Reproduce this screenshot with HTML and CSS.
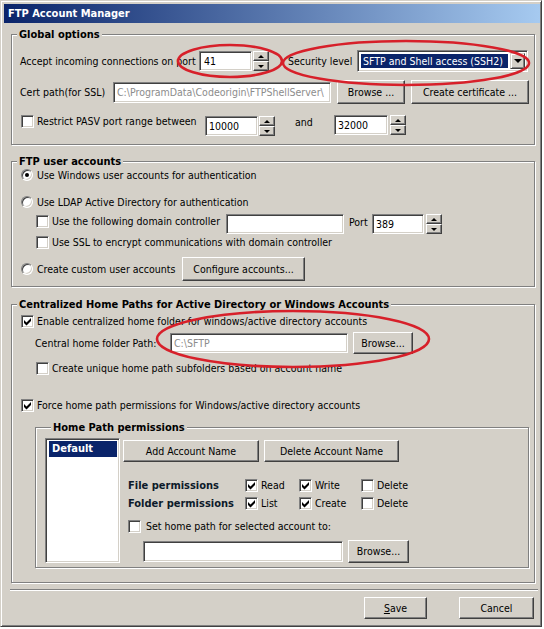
FILE: index.html
```html
<!DOCTYPE html>
<html>
<head>
<meta charset="utf-8">
<title>FTP Account Manager</title>
<link rel="stylesheet" href="styles.css">
</head>
<body>
<div class="window">
  <div class="titlebar">FTP Account Manager</div>
  <div class="client">

    <section class="group g-global">
      <div class="gtitle">Global options</div>
      <div class="row r1">
        <span class="lbl port-label">Accept incoming connections on port</span>
        <span class="edit port-field">41</span>
        <span class="spin"><span class="sb"><i class="arr-up"></i></span><span class="sb"><i class="arr-dn"></i></span></span>
        <span class="lbl sec-label">Security level</span>
        <span class="combo"><span class="combo-sel">SFTP and Shell access (SSH2)</span><span class="combo-btn"><i class="arr-dn big"></i></span></span>
      </div>
      <div class="row r2">
        <span class="lbl cert-label">Cert path(for SSL)</span>
        <span class="edit cert-field disabled">C:\ProgramData\Codeorigin\FTPShellServer\</span>
        <span class="btn browse-cert">Browse ...</span>
        <span class="btn create-cert">Create certificate ...</span>
      </div>
      <div class="row top r3">
        <span class="check pasv-check"><span class="cb"></span><span>Restrict PASV port range between</span></span>
        <span class="edit range-field from">10000</span>
        <span class="spin from"><span class="sb"><i class="arr-up"></i></span><span class="sb"><i class="arr-dn"></i></span></span>
        <span class="lbl and-label">and</span>
        <span class="edit range-field">32000</span>
        <span class="spin near"><span class="sb"><i class="arr-up"></i></span><span class="sb"><i class="arr-dn"></i></span></span>
      </div>
    </section>

    <section class="group g-users">
      <div class="gtitle">FTP user accounts</div>
      <div class="row u1"><span class="radio"><span class="rb on"></span><span>Use Windows user accounts for authentication</span></span></div>
      <div class="row u2"><span class="radio"><span class="rb"></span><span>Use LDAP Active Directory for authentication</span></span></div>
      <div class="row top u3">
        <span class="check dc-check"><span class="cb"></span><span>Use the following domain controller</span></span>
        <span class="edit dc-field"></span>
        <span class="lbl ldap-port-label">Port</span>
        <span class="edit ldap-port-field">389</span>
        <span class="spin near"><span class="sb"><i class="arr-up"></i></span><span class="sb"><i class="arr-dn"></i></span></span>
      </div>
      <div class="row u4"><span class="check"><span class="cb"></span><span>Use SSL to encrypt communications with domain controller</span></span></div>
      <div class="row u5">
        <span class="radio custom-radio"><span class="rb"></span><span>Create custom user accounts</span></span>
        <span class="btn configure">Configure accounts...</span>
      </div>
    </section>

    <section class="group g-central">
      <div class="gtitle">Centralized Home Paths for Active Directory or Windows Accounts</div>
      <div class="row c1"><span class="check"><span class="cb"><svg viewBox="0 0 11 11"><polygon points="2,4 4.5,6.5 9,2 9,5 4.5,9.5 2,7"/></svg></span><span>Enable centralized home folder for windows/active directory accounts</span></span></div>
      <div class="row c2">
        <span class="lbl central-label">Central home folder Path:</span>
        <span class="edit central-field disabled">C:\SFTP</span>
        <span class="btn browse-central">Browse...</span>
      </div>
      <div class="row c3"><span class="check"><span class="cb"></span><span>Create unique home path subfolders based on account name</span></span></div>
      <div class="row c4"><span class="check"><span class="cb"><svg viewBox="0 0 11 11"><polygon points="2,4 4.5,6.5 9,2 9,5 4.5,9.5 2,7"/></svg></span><span>Force home path permissions for Windows/active directory accounts</span></span></div>

      <section class="group g-home">
        <div class="gtitle">Home Path permissions</div>
        <div class="home-body">
          <div class="listbox"><div class="list-item">Default</div></div>
          <div class="home-side">
            <div class="row acct-buttons">
              <span class="btn add-acct">Add Account Name</span>
              <span class="btn del-acct">Delete Account Name</span>
            </div>
            <div class="row perm-row file">
              <span class="perm-label">File permissions</span>
              <span class="check perm"><span class="cb"><svg viewBox="0 0 11 11"><polygon points="2,4 4.5,6.5 9,2 9,5 4.5,9.5 2,7"/></svg></span><span>Read</span></span>
              <span class="check perm wide"><span class="cb"><svg viewBox="0 0 11 11"><polygon points="2,4 4.5,6.5 9,2 9,5 4.5,9.5 2,7"/></svg></span><span>Write</span></span>
              <span class="check"><span class="cb"></span><span>Delete</span></span>
            </div>
            <div class="row perm-row folder">
              <span class="perm-label">Folder permissions</span>
              <span class="check perm"><span class="cb"><svg viewBox="0 0 11 11"><polygon points="2,4 4.5,6.5 9,2 9,5 4.5,9.5 2,7"/></svg></span><span>List</span></span>
              <span class="check perm wide"><span class="cb"><svg viewBox="0 0 11 11"><polygon points="2,4 4.5,6.5 9,2 9,5 4.5,9.5 2,7"/></svg></span><span>Create</span></span>
              <span class="check"><span class="cb"></span><span>Delete</span></span>
            </div>
            <div class="row set-row"><span class="check set-check"><span class="cb"></span><span>Set home path for selected account to:</span></span></div>
            <div class="row path-row">
              <span class="edit path-field"></span>
              <span class="btn browse-path">Browse...</span>
            </div>
          </div>
        </div>
      </section>
    </section>
  </div>

  <div class="sep"></div>
  <div class="footer">
    <span class="btn save"><span class="ul">S</span>ave</span>
    <span class="btn cancel">Cancel</span>
  </div>
</div>

<svg class="marks" width="544" height="629" viewBox="0 0 544 629">
  <ellipse cx="230" cy="61" rx="52" ry="16"/>
  <ellipse cx="406" cy="63" rx="123" ry="22"/>
  <ellipse cx="293" cy="339" rx="136" ry="28"/>
</svg>
</body>
</html>
```

FILE: styles.css
```css
* { box-sizing: border-box; }
html, body { margin: 0; padding: 0; }
body {
  width: 544px; height: 629px; overflow: hidden; position: relative;
  background: #fff;
  font-family: "DejaVu Sans Condensed", "DejaVu Sans", sans-serif;
  font-size: 10.5px; line-height: 13px; color: #000;
}

.window {
  width: 542px; height: 627px;
  background: #d4d0c8;
  border: 1px solid; border-color: #d4d0c8 #404040 #404040 #d4d0c8;
  box-shadow: inset 1px 1px #fff, inset -1px -1px #808080;
  padding: 3px 1px 3px 3px;
  display: flex; flex-direction: column;
}

.titlebar {
  flex: none; height: 19px; line-height: 19px; padding-left: 4px;
  color: #fff; font-weight: bold; font-size: 11px;
  background: linear-gradient(to right, #0a246a, #a6caf0);
}

.client { padding: 0 5px 0 7px; display: flex; flex-direction: column; }

/* group boxes */
.group {
  border: 1px solid #808080;
  box-shadow: inset 1px 1px #fff, 1px 1px #fff;
  display: flex; flex-direction: column;
}
.gtitle {
  align-self: flex-start; margin: -7px 0 0 5px; padding: 0 2px;
  background: #d4d0c8; font-weight: bold; font-size: 11px; white-space: nowrap;
}

.row { display: flex; align-items: center; white-space: nowrap; flex: none; }
.row.top { align-items: flex-start; }

.lbl { flex: none; }

/* controls */
.edit {
  flex: none; display: flex; align-items: center; overflow: hidden;
  background: #fff; padding: 0 3px; white-space: nowrap;
  border: 1px solid; border-color: #808080 #fff #fff #808080;
  box-shadow: inset 1px 1px #404040, inset -1px -1px #d4d0c8;
}
.edit.disabled { color: #8c8c8c; }

.btn {
  flex: none; display: flex; align-items: center; justify-content: center;
  background: #d4d0c8;
  border: 1px solid; border-color: #fff #404040 #404040 #fff;
  box-shadow: inset -1px -1px #808080;
}

.spin { flex: none; width: 16px; height: 20px; display: flex; flex-direction: column; margin-left: 1px; }
.spin.near { margin-left: 2px; }
.sb {
  flex: 1; display: flex; align-items: center; justify-content: center;
  background: #d4d0c8;
  border: 1px solid; border-color: #fff #404040 #404040 #fff;
  box-shadow: inset -1px -1px #808080;
}
.arr-up { width: 0; height: 0; border-left: 3px solid transparent; border-right: 3px solid transparent; border-bottom: 3px solid #000; }
.arr-dn { width: 0; height: 0; border-left: 3px solid transparent; border-right: 3px solid transparent; border-top: 3px solid #000; }
.arr-dn.big { border-left-width: 4px; border-right-width: 4px; border-top-width: 4px; }

.cb {
  flex: none; width: 13px; height: 13px; background: #fff;
  border: 1px solid; border-color: #808080 #fff #fff #808080;
  box-shadow: inset 1px 1px #404040, inset -1px -1px #d4d0c8;
}
.cb svg { display: block; width: 11px; height: 11px; }
.cb polygon { fill: #000; }

.rb {
  flex: none; width: 12px; height: 12px; border-radius: 50%; background: #fff;
  border: 1px solid; border-color: #808080 #fff #fff #808080;
  box-shadow: inset 1px 1px #404040, inset -1px -1px #d4d0c8;
  display: flex; align-items: center; justify-content: center;
}
.rb.on::after { content: ""; width: 4px; height: 4px; border-radius: 50%; background: #000; }

.check { flex: none; display: flex; align-items: center; gap: 3px; }
.radio { flex: none; display: flex; align-items: center; gap: 4px; }

.combo {
  flex: none; width: 171px; height: 22px; display: flex; padding: 2px;
  background: #fff;
  border: 1px solid; border-color: #808080 #fff #fff #808080;
  box-shadow: inset 1px 1px #404040, inset -1px -1px #d4d0c8;
}
.combo-sel {
  flex: 1; margin: 1px 2px 1px 1px; padding-left: 2px;
  background: #0a246a; color: #fff; display: flex; align-items: center; overflow: hidden;
}
.combo-btn {
  flex: none; width: 15px; display: flex; align-items: center; justify-content: center;
  background: #d4d0c8;
  border: 1px solid; border-color: #d4d0c8 #404040 #404040 #d4d0c8;
  box-shadow: inset 1px 1px #fff, inset -1px -1px #808080;
}

/* global options */
.g-global { margin-top: 11px; padding-bottom: 7px; }
.g-global .r1 { margin-top: 9px; height: 22px; padding-left: 8px; }
.port-label { width: 179px; }
.port-field { width: 53px; height: 20px; padding-left: 4px; }
.sec-label { width: 69px; margin-left: 19px; }
.g-global .r2 { margin-top: 8px; height: 24px; padding-left: 8px; }
.cert-label { width: 93px; }
.cert-field { width: 218px; height: 21px; }
.browse-cert { width: 68px; height: 24px; margin-left: 6px; }
.create-cert { width: 118px; height: 24px; margin-left: 6px; }
.g-global .r3 { margin-top: 11px; height: 22px; padding-left: 9px; }
.pasv-check { width: 184px; }
.range-field { width: 54px; height: 20px; }
.range-field.from { margin-top: 1px; width: 53px; }
.spin.from { margin-top: 1px; }
.and-label { margin: 1px 0 0 20px; width: 39px; }

/* ftp user accounts */
.g-users { margin-top: 16px; padding-bottom: 5px; }
.g-users .u1 { height: 14px; padding-left: 9px; }
.g-users .u2 { margin-top: 13px; height: 14px; padding-left: 9px; }
.g-users .u3 { margin-top: 5px; height: 20px; padding-left: 24px; }
.dc-check { width: 190px; margin-top: 1px; }
.dc-field { width: 118px; height: 20px; }
.ldap-port-label { width: 23px; margin: 2px 0 0 5px; }
.ldap-port-field { width: 52px; height: 20px; }
.g-users .u4 { margin-top: 1px; height: 14px; padding-left: 24px; }
.g-users .u5 { margin-top: 8px; height: 24px; padding-left: 9px; }
.custom-radio { width: 161px; }
.configure { width: 123px; height: 24px; }

/* centralized */
.g-central { margin-top: 17px; padding-bottom: 14px; }
.g-central .c1 { margin-top: 3px; height: 14px; padding-left: 9px; }
.g-central .c2 { margin-top: 4px; height: 22px; padding-left: 23px; }
.central-label { width: 135px; }
.central-field { width: 178px; height: 20px; }
.browse-central { width: 60px; height: 22px; margin-left: 5px; }
.g-central .c3 { margin-top: 7px; height: 14px; padding-left: 24px; }
.g-central .c4 { margin-top: 23px; height: 14px; padding-left: 9px; }

/* home path permissions */
.g-home { margin: 15px 5px 0 23px; padding: 0 0 4px 9px; }
.g-home .gtitle { margin-left: 6px; }
.home-body { display: flex; align-items: flex-start; margin-top: 4px; }
.listbox {
  flex: none; width: 75px; height: 125px; padding: 2px; background: #fff;
  border: 1px solid; border-color: #808080 #fff #fff #808080;
  box-shadow: inset 1px 1px #404040, inset -1px -1px #d4d0c8;
}
.list-item {
  height: 16px; line-height: 16px; margin-left: 1px; padding-left: 3px;
  background: #0a246a; color: #fff; font-weight: bold; font-size: 11px;
}
.home-side { margin: 2px 0 0 3px; display: flex; flex-direction: column; }
.acct-buttons { height: 22px; }
.add-acct { width: 136px; height: 22px; }
.del-acct { width: 135px; height: 22px; margin-left: 5px; }
.perm-row { height: 14px; padding-left: 5px; }
.perm-row.file { margin-top: 16px; }
.perm-row.folder { margin-top: 4px; }
.perm-label { width: 117px; font-weight: bold; font-size: 11px; color: #0c1a2a; }
.perm { width: 54px; }
.perm.wide { width: 62px; }
.set-row { margin-top: 9px; height: 14px; padding-left: 5px; }
.set-check { gap: 5px; }
.path-row { margin-top: 7px; height: 23px; padding-left: 20px; }
.path-field { width: 200px; height: 21px; }
.browse-path { width: 61px; height: 23px; margin-left: 5px; }

/* footer */
.sep { flex: none; height: 2px; margin: 6px 2px 0 6px; border-top: 1px solid #808080; border-bottom: 1px solid #fff; }
.footer { flex: none; display: flex; justify-content: flex-end; margin-top: 6px; padding-right: 6px; }
.save { width: 63px; height: 22px; }
.cancel { width: 75px; height: 22px; margin-left: 32px; }
.ul { text-decoration: underline; }

/* red annotation marks */
.marks { position: absolute; left: 0; top: 0; pointer-events: none; }
.marks ellipse { fill: none; stroke: #d7202a; stroke-width: 2.6; }
```
